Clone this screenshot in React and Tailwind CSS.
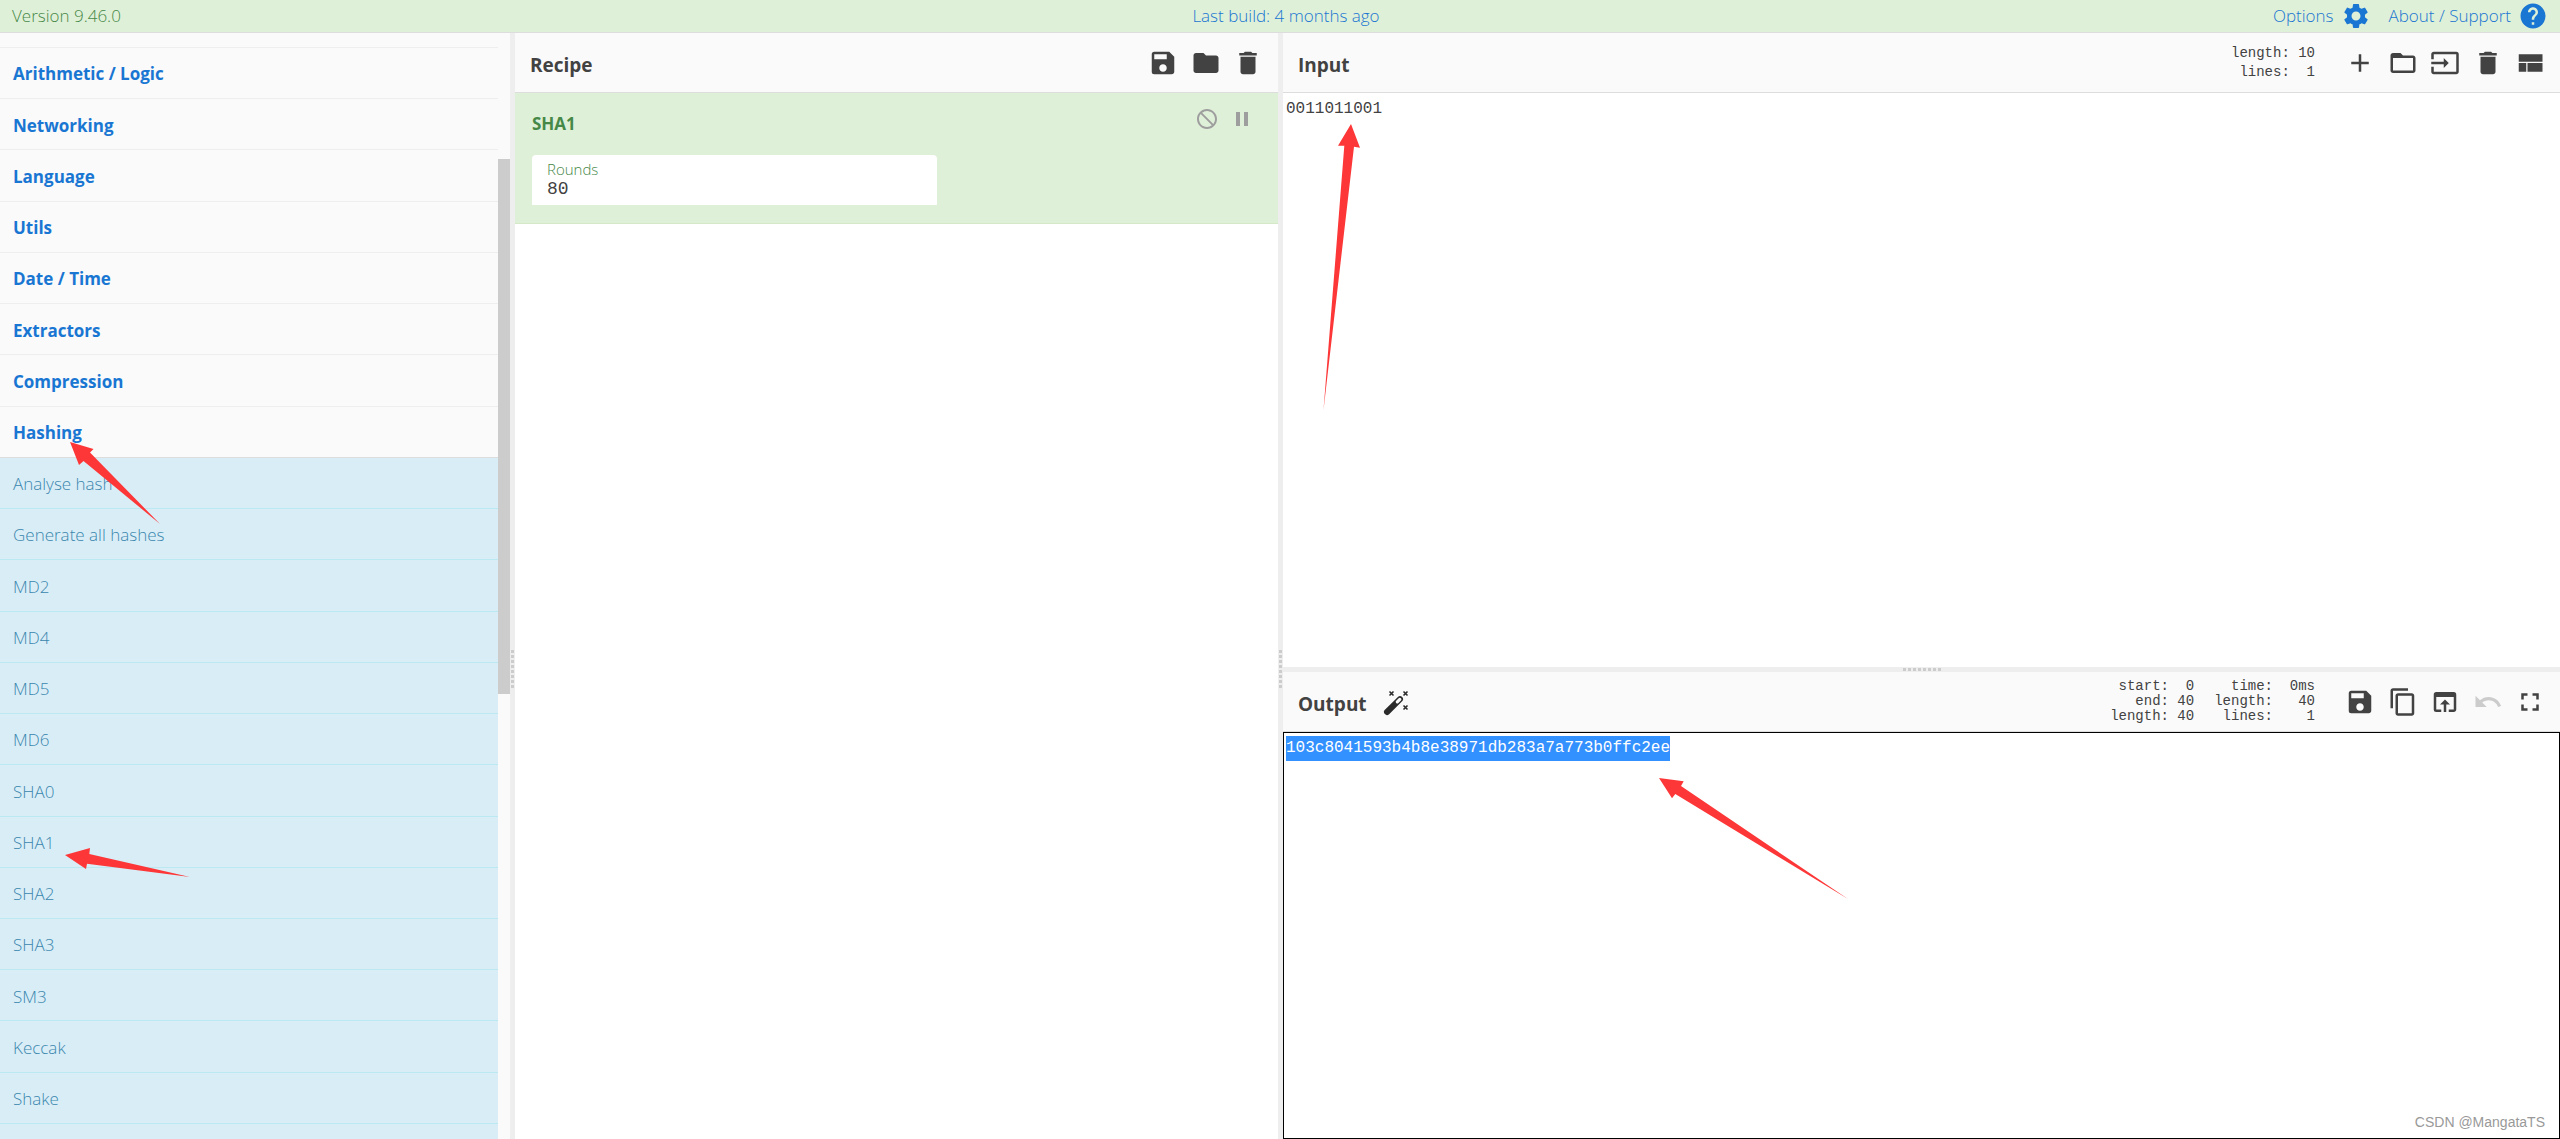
import { useState } from 'react';
import {
  MdAdd,
  MdContentCopy,
  MdDelete,
  MdFolder,
  MdFolderOpen,
  MdFullscreen,
  MdHelp,
  MdInput,
  MdNotInterested,
  MdOpenInBrowser,
  MdPause,
  MdSave,
  MdSettings,
  MdUndo,
} from 'react-icons/md';

const CATEGORIES = [
  'Arithmetic / Logic',
  'Networking',
  'Language',
  'Utils',
  'Date / Time',
  'Extractors',
  'Compression',
  'Hashing',
];

const HASHING_OPS = [
  'Analyse hash',
  'Generate all hashes',
  'MD2',
  'MD4',
  'MD5',
  'MD6',
  'SHA0',
  'SHA1',
  'SHA2',
  'SHA3',
  'SM3',
  'Keccak',
  'Shake',
];

// Annotation arrows, tip first
const ARROWS = [
  '70,442 93.5,449 90,452.5 160,524 83.5,461 79,465',
  '65,855 90,848 89.3,854 190,877 87,863.7 86,869',
  '1351,124 1360,147.7 1354,146.7 1323.5,410 1344.3,145.7 1338,145.7',
  '1659,778 1683.7,781.3 1681,786 1848,899 1675.3,794 1672,798.3',
];

export default function App() {
  return (
    <div className="relative flex h-screen flex-col overflow-hidden bg-white font-['Open_Sans','Noto_Sans',sans-serif] text-[17px] text-[#424242]">
      <Banner />
      <main className="flex min-h-0 flex-1">
        <OperationList />
        <Gutter />
        <Recipe />
        <Gutter />
        <div className="flex min-w-0 flex-[1277] flex-col">
          <InputPane />
          <Gutter horizontal />
          <OutputPane />
        </div>
      </main>

      <svg className="pointer-events-none absolute top-0 left-0" width="1900" height="920" fill="#fd3737">
        {ARROWS.map(points => (
          <polygon key={points} points={points} />
        ))}
      </svg>
      <div className="absolute right-[15px] bottom-1.5 font-['Liberation_Sans',sans-serif] text-[14px] text-[#999]">
        CSDN @MangataTS
      </div>
    </div>
  );
}

function Banner() {
  return (
    <header className="grid h-[33px] shrink-0 grid-cols-3 items-center border-b border-[#ddd] bg-[#dff0d8] px-3 font-light">
      <span className="text-[#468847]">Version 9.46.0</span>
      <a href="#build" className="pl-3 text-center text-[#1976d2]">Last build: 4 months ago</a>
      <nav className="flex items-center justify-end gap-[18px] text-[#1976d2]">
        <a href="#options" className="flex items-center gap-[7px]">
          Options <MdSettings size={30} />
        </a>
        <a href="#support" className="flex items-center gap-[7px]">
          About / Support <MdHelp size={30} />
        </a>
      </nav>
    </header>
  );
}

// Draggable divider between panes
function Gutter({ horizontal }) {
  if (horizontal) {
    return (
      <div className="flex h-[5px] shrink-0 items-center justify-center bg-[#eee]">
        <div className="h-[3px] w-[38px] bg-[repeating-linear-gradient(90deg,#ccc_0_3px,transparent_3px_5px)]" />
      </div>
    );
  }
  return (
    <div className="flex w-[5px] shrink-0 flex-col items-center bg-[#eee]">
      <div className="flex-[617]" />
      <div className="h-[38px] w-[3px] bg-[repeating-linear-gradient(180deg,#ccc_0_3px,transparent_3px_5px)]" />
      <div className="flex-[451]" />
    </div>
  );
}

function OperationList() {
  return (
    <aside className="flex min-w-0 flex-[510] bg-[#fafafa]">
      <ul className="flex min-w-0 flex-1 flex-col overflow-hidden">
        <li className="h-[15px] shrink-0 border-b border-[#eee]" />
        {CATEGORIES.map((name, i) => (
          <li
            key={name}
            className={`flex flex-1 border-b ${i === CATEGORIES.length - 1 ? 'border-[#ddd]' : 'border-[#eee]'}`}
          >
            <button type="button" className="flex-1 pt-0.5 pl-[13px] text-left font-bold text-[#1976d2]">
              {name}
            </button>
          </li>
        ))}
        {HASHING_OPS.map(name => (
          <li
            key={name}
            className="flex flex-1 items-center border-b border-[#bce8f1] bg-[#d9edf7] pl-[13px] font-light text-[#3a87ad]"
          >
            <span className="pt-0.5">{name}</span>
          </li>
        ))}
        <li className="h-[15px] shrink-0 bg-[#d9edf7]" />
      </ul>
      {/* Scrollbar */}
      <div className="flex w-3 flex-col">
        <div className="flex-[126]" />
        <div className="flex-[535] bg-[#ccc]" />
        <div className="flex-[445]" />
      </div>
    </aside>
  );
}

function PaneHeader({ title, extra, children }) {
  return (
    <div className="flex h-[60px] shrink-0 items-center border-b border-[#ddd] bg-[#fafafa] px-[15px]">
      <h2 className="pt-1.5 text-[19px] font-bold">{title}</h2>
      {extra}
      <div className="ml-auto flex items-center">{children}</div>
    </div>
  );
}

function IconButton({ label, icon: Icon, size = 30, disabled = false }) {
  return (
    <button type="button" aria-label={label} title={label} disabled={disabled} className="disabled:text-[#ccc]">
      <Icon size={size} />
    </button>
  );
}

function Recipe() {
  const [rounds, setRounds] = useState('80');

  return (
    <section className="flex min-w-0 flex-[763] flex-col">
      <PaneHeader title="Recipe">
        <div className="flex w-[115px] justify-between">
          <IconButton label="Save recipe" icon={MdSave} />
          <IconButton label="Load recipe" icon={MdFolder} />
          <IconButton label="Clear recipe" icon={MdDelete} />
        </div>
      </PaneHeader>
      <div className="border-b border-[#d6e9c6] bg-[#dff0d8] pt-[14px] pr-6 pb-[18px] pl-[17px]">
        <div className="flex h-12 items-start justify-between">
          <h3 className="pt-1 font-bold text-[#468847]">SHA1</h3>
          <div className="flex gap-[11px] text-[#9e9e9e]">
            <IconButton label="Disable operation" icon={MdNotInterested} size={24} />
            <IconButton label="Set breakpoint" icon={MdPause} size={24} />
          </div>
        </div>
        <div className="flex h-[50px] w-[405px] flex-col rounded-t bg-white px-[15px] pt-1">
          <label htmlFor="rounds" className="text-[15px] leading-5 font-light text-[#468847]">
            Rounds
          </label>
          <input
            id="rounds"
            value={rounds}
            onChange={e => setRounds(e.target.value)}
            className="w-full font-['Liberation_Mono',monospace] text-[18px] leading-5 outline-none"
          />
        </div>
      </div>
    </section>
  );
}

function InputPane() {
  const [text, setText] = useState('0011011001');

  return (
    <section className="flex min-h-0 flex-[634] flex-col">
      <PaneHeader title="Input">
        <Stats rows={['length: 10', ' lines:  1']} className="mr-[30px] leading-[19px]" />
        <div className="flex w-[200px] justify-between">
          <IconButton label="Add a new input tab" icon={MdAdd} />
          <IconButton label="Open folder as input" icon={MdFolderOpen} />
          <IconButton label="Open file as input" icon={MdInput} />
          <IconButton label="Clear input and output" icon={MdDelete} />
          <IconButton label="Reset pane layout" icon={ViewCompactIcon} />
        </div>
      </PaneHeader>
      <textarea
        aria-label="Input"
        spellCheck={false}
        value={text}
        onChange={e => setText(e.target.value)}
        className="block w-full flex-1 resize-none px-[3px] py-1 font-['Liberation_Mono',monospace] text-base leading-[25px] outline-none"
      />
    </section>
  );
}

function OutputPane() {
  return (
    <section className="flex min-h-0 flex-[467] flex-col">
      <PaneHeader
        title="Output"
        extra={
          <button type="button" aria-label="Magic" className="ml-[14px]">
            <WandIcon />
          </button>
        }
      >
        <Stats rows={[' start:  0', '   end: 40', 'length: 40']} className="mr-5 leading-[15px]" />
        <Stats rows={['  time:  0ms', 'length:   40', ' lines:    1']} className="mr-[30px] leading-[15px]" />
        <div className="flex w-[200px] justify-between">
          <IconButton label="Save output to file" icon={MdSave} />
          <IconButton label="Copy output" icon={MdContentCopy} />
          <IconButton label="Replace input with output" icon={MdOpenInBrowser} />
          <IconButton label="Undo" icon={MdUndo} disabled />
          <IconButton label="Maximise output pane" icon={MdFullscreen} />
        </div>
      </PaneHeader>
      <div className="flex-1 border border-black px-[2px] py-[3px] font-['Liberation_Mono',monospace] text-base leading-[25px]">
        <span className="inline-block bg-[#3390ff] text-white">103c8041593b4b8e38971db283a7a773b0ffc2ee</span>
      </div>
    </section>
  );
}

function Stats({ rows, className }) {
  return (
    <pre className={`font-['Liberation_Mono',monospace] text-[14px] ${className}`}>
      {rows.join('\n')}
    </pre>
  );
}

function ViewCompactIcon({ size }) {
  return (
    <svg width={size} height={size} viewBox="0 0 24 24" fill="currentColor">
      <path d="M3 19h6v-7H3v7zm7 0h12v-7H10v7zM3 5v6h19V5H3z" />
    </svg>
  );
}

function WandIcon() {
  return (
    <svg width="30" height="30" viewBox="0 0 30 30" fill="none" stroke="#2b2b2b">
      <path d="M6 25L19 12.200" strokeWidth="6" strokeLinecap="round" />
      <path d="M16.300 14.800L18.800 12.400" stroke="#fafafa" strokeWidth="3.200" strokeLinecap="round" />
      <path
        d="M8.500 4.500l4 4m0-4l-4 4M22.500 4.500l4 4m0-4l-4 4M22.500 18.500l4 4m0-4l-4 4"
        strokeWidth="1.600"
      />
    </svg>
  );
}
